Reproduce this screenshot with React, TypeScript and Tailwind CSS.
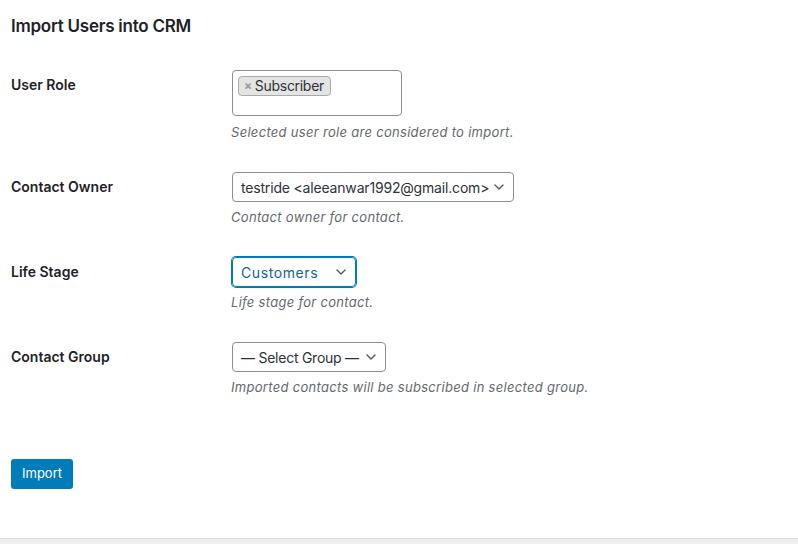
import React from "react";

function Chevron({ color = "#50575e" }: { color?: string }) {
  return (
    <svg width="10" height="6" viewBox="0 0 10 6" fill="none" className="shrink-0">
      <path d="M1 1l4 4 4-4" stroke={color} strokeWidth="1.4" strokeLinecap="round" strokeLinejoin="round" />
    </svg>
  );
}

function Row({ label, desc, first, children }: { label: string; desc: string; first?: boolean; children: React.ReactNode }) {
  return (
    <div className="flex items-start">
      <div className="w-[220px] shrink-0 pt-[6px] text-[14px] font-semibold leading-[18px] text-[#1d2327]">{label}</div>
      <div className="flex flex-col items-start">
        {children}
        <p className={(first ? "mt-[7px] " : "mt-[6px] ") + "text-[13px] italic leading-[18px] tracking-[0.3px] text-[#646970]"}>{desc}</p>
      </div>
    </div>
  );
}

export default function App() {
  return (
    <div className="flex min-h-[544px] flex-col bg-[#f0f0f1] font-['Inter','Liberation_Sans',sans-serif]">
      <div className="h-[539px] border-b border-[#dcdcde] bg-white px-[11px] pt-[15px]">
        <h2 className="text-[17px] font-semibold leading-[22px] tracking-[-0.25px] text-[#1d2327]">Import Users into CRM</h2>

        <div className="mt-[33px] flex flex-col gap-[31px]">
          <Row first label="User Role" desc="Selected user role are considered to import.">
            <div className="ml-px flex h-[46px] w-[170px] items-start rounded-[4px] border border-[#8c8f94] pl-[5px] pt-[5px]">
              <span className="flex h-[20px] items-center gap-[3px] rounded-[4px] border border-[#aaaaaa] bg-[#e4e4e4] pl-[5px] pr-[6px] text-[14px] leading-none tracking-[-0.3px] text-[#2c3338]">
                <span className="text-[12px] font-bold text-[#999999]">×</span>
                <span>Subscriber</span>
              </span>
            </div>
          </Row>

          <Row label="Contact Owner" desc="Contact owner for contact.">
            <div className="ml-px flex h-[30px] w-[282px] items-center rounded-[4px] border border-[#8c8f94] pl-[8px] pr-[9px] text-[14px] text-[#2c3338]">
              <span className="whitespace-nowrap tracking-[-0.18px]">testride &lt;aleeanwar1992@gmail.com&gt;</span>
              <span className="ml-auto"><Chevron /></span>
            </div>
          </Row>

          <Row label="Life Stage" desc="Life stage for contact.">
            <div className="ml-px flex h-[30px] w-[124px] items-center rounded-[4px] border border-[#007cba] pl-[8px] pr-[9px] text-[14px] text-[#0e6598] shadow-[0_0_0_1px_#007cba]">
              <span className="tracking-[0.6px]">Customers</span>
              <span className="ml-auto"><Chevron /></span>
            </div>
          </Row>

          <Row label="Contact Group" desc="Imported contacts will be subscribed in selected group.">
            <div className="ml-px flex h-[30px] w-[154px] items-center rounded-[4px] border border-[#8c8f94] pl-[8px] pr-[9px] text-[14px] text-[#2c3338]">
              <span className="whitespace-nowrap tracking-[-0.25px]">— Select Group —</span>
              <span className="ml-auto"><Chevron /></span>
            </div>
          </Row>
        </div>

        <button className="mt-[63px] flex h-[30px] w-[62px] items-center justify-center rounded-[3px] bg-[#007cba] text-[13px] text-white">
          Import
        </button>
      </div>
    </div>
  );
}
